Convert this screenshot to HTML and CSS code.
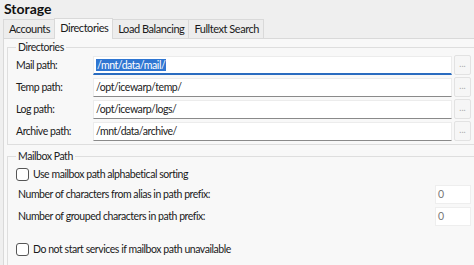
FILE: index.html
```html
<!DOCTYPE html>
<html>
<head>
<meta charset="utf-8">
<link rel="stylesheet" href="styles.css">
</head>
<body>
<div class="title">Storage</div>
<div class="tabs">
  <div class="tab">Accounts</div>
  <div class="tab active">Directories</div>
  <div class="tab">Load Balancing</div>
  <div class="tab">Fulltext Search</div>
</div>
<div class="panel">
  <fieldset class="group dirs">
    <legend>Directories</legend>
    <div class="row">
      <span class="lbl">Mail path:</span>
      <div class="field focus"><span class="sel">/mnt/data/mail/</span></div>
      <div class="btn">...</div>
    </div>
    <div class="row">
      <span class="lbl">Temp path:</span>
      <div class="field">/opt/icewarp/temp/</div>
      <div class="btn">...</div>
    </div>
    <div class="row">
      <span class="lbl">Log path:</span>
      <div class="field">/opt/icewarp/logs/</div>
      <div class="btn">...</div>
    </div>
    <div class="row">
      <span class="lbl">Archive path:</span>
      <div class="field">/mnt/data/archive/</div>
      <div class="btn">...</div>
    </div>
  </fieldset>
  <fieldset class="group mbox">
    <legend>Mailbox Path</legend>
    <div class="check first"><span class="box"></span>Use mailbox path alphabetical sorting</div>
    <div class="numrow"><span>Number of characters from alias in path prefix:</span><div class="num">0</div></div>
    <div class="numrow"><span>Number of grouped characters in path prefix:</span><div class="num">0</div></div>
    <div class="check last"><span class="box"></span>Do not start services if mailbox path unavailable</div>
  </fieldset>
</div>
</body>
</html>
```
FILE: styles.css
```css
html, body {
  margin: 0;
  padding: 0;
}
body {
  width: 474px;
  height: 265px;
  overflow: hidden;
  background: #efefef;
  font-family: "Lato", "Noto Sans", sans-serif;
  font-size: 10.5px;
  letter-spacing: -0.45px;
  color: #1a1a1a;
}
.title {
  font-weight: bold;
  font-size: 14px;
  letter-spacing: 0;
  height: 18px;
  line-height: 17px;
  padding-left: 4px;
  color: #111;
}
.tabs {
  display: flex;
  align-items: flex-end;
  padding-left: 3px;
  height: 20px;
}
.tab {
  height: 18px;
  line-height: 18px;
  padding: 0 4px 0 5px;
  border: 1px solid #d9d9d9;
  border-bottom: none;
  margin-right: -1px;
  background: #ededed;
  font-size: 11px;
  letter-spacing: -0.45px;
}
.tab.active {
  height: 20px;
  line-height: 17px;
  background: #f9f9f9;
  position: relative;
  z-index: 1;
  margin-bottom: -1px;
}
.panel {
  background: #f8f8f8;
  border-top: 1px solid #d9d9d9;
  border-left: 1px solid #d9d9d9;
  margin-left: 3px;
  height: 230px;
  padding: 2px 0 0 3px;
}
.group {
  margin: 0;
  padding: 0 0 0 8px;
  border: 1px solid #dedede;
  border-right: none;
}
.group legend {
  padding: 0 2px;
  line-height: 13px;
  color: #222;
}
.dirs {
  padding-bottom: 2px;
}
.row {
  display: flex;
  align-items: center;
  height: 22px;
}
.lbl {
  width: 77px;
}
.field {
  flex: 1;
  height: 17px;
  line-height: 17px;
  background: #fff;
  border: 1px solid #ececec;
  border-bottom: 1px solid #8a8a8a;
  padding-left: 2px;
  color: #222;
}
.field.focus {
  border-bottom: 2px solid #2a6cc0;
  height: 16px;
}
.sel {
  background: #2f76d2;
  color: #fff;
  padding: 0 1px;
}
.btn {
  width: 15px;
  height: 18px;
  margin: 0 3px 0 2px;
  border: 1px solid #e2e2e2;
  border-radius: 2px;
  color: #aaa;
  font-size: 9px;
  letter-spacing: 0;
  line-height: 16px;
  text-align: center;
  background: #f6f6f6;
}
.mbox {
  margin-top: 5px;
  height: 120px;
}
.check {
  display: flex;
  align-items: center;
  height: 18px;
}
.check.first {
  margin-top: 2px;
}
.box {
  width: 11px;
  height: 11px;
  border: 1px solid #555;
  border-radius: 3px;
  margin-right: 4px;
  background: #fff;
}
.numrow {
  display: flex;
  align-items: center;
  justify-content: space-between;
  height: 22px;
  padding-left: 2px;
}
.num {
  width: 32px;
  height: 17px;
  line-height: 17px;
  background: #fff;
  border: 1px solid #eee;
  padding-left: 2px;
  margin-right: 3px;
  color: #777;
}
.check.last {
  margin-top: 13px;
}
```
